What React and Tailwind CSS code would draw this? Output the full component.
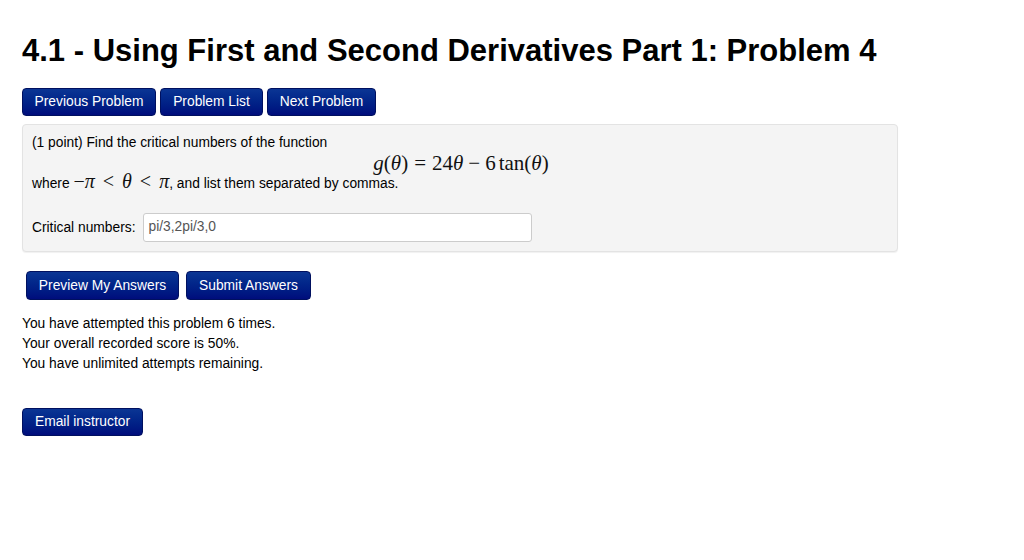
export default function App() {
  const btn =
    "h-[28px] px-[8px] rounded-[4px] text-white text-[13.8px] bg-gradient-to-b from-[#0b3594] to-[#000c7c] border border-[#00105f] leading-none flex items-center justify-center";
  const serif = { fontFamily: '"Liberation Serif", "Times New Roman", serif' };
  return (
    <div className="w-[1024px] h-[560px] bg-white text-black px-[22px] pt-[31px]" style={{ fontFamily: '"Liberation Sans", Arial, sans-serif' }}>
      <h1 className="text-[31px] font-bold leading-[40px]">
        4.1 - Using First and Second Derivatives Part 1: Problem 4
      </h1>
      <div className="flex gap-[4px] mt-[17px]">
        <button className={btn + " w-[134px]"}>Previous Problem</button>
        <button className={btn + " w-[103px]"}>Problem List</button>
        <button className={btn + " w-[109px]"}>Next Problem</button>
      </div>
      <div className="mt-[8px] w-[876px] h-[128px] bg-[#f4f4f4] border border-[#e3e3e3] rounded-[4px] shadow-[0_1px_1px_rgba(0,0,0,0.06)] px-[9px] pt-[9px] text-[13.8px]">
        <div className="leading-[18px]">(1 point) Find the critical numbers of the function</div>
        <div className="flex justify-center leading-[22px] h-[21px]">
          <span className="text-[21px] text-[#111] pl-[2px]" style={serif}>
            <i>g</i>(<i>θ</i>)<span className="mx-[6px]">=</span>24<i>θ</i><span className="mx-[5px]">−</span>6<span className="ml-[3px]">tan</span>(<i>θ</i>)
          </span>
        </div>
        <div className="leading-[20px] h-[21px] pt-[1px]">
          <span>where&nbsp;</span>
          <span className="text-[20px] text-[#111] leading-[10px]" style={serif}>
            −<i>π</i><span className="mx-[8px]">&lt;</span><i>θ</i><span className="mx-[8px]">&lt;</span><i>π</i>
          </span>
          <span>, and list them separated by commas.</span>
        </div>
        <div className="flex items-center mt-[19px]">
          <span className="leading-[18px]">Critical numbers:</span>
          <div className="ml-[7px] w-[389px] h-[29px] bg-white border border-[#cccccc] rounded-[3px] flex items-center px-[5px] text-[#555] text-[13.8px]">
            pi/3,2pi/3,0
          </div>
        </div>
      </div>
      <div className="flex gap-[7px] mt-[19px] ml-[4px]">
        <button className={btn + " w-[153px] h-[29px]"}>Preview My Answers</button>
        <button className={btn + " w-[125px] h-[29px]"}>Submit Answers</button>
      </div>
      <div className="mt-[14px] text-[13.8px] leading-[20px]">
        <div>You have attempted this problem 6 times.</div>
        <div>Your overall recorded score is 50%.</div>
        <div>You have unlimited attempts remaining.</div>
      </div>
      <div className="mt-[34px]">
        <button className={btn + " w-[121px]"}>Email instructor</button>
      </div>
    </div>
  );
}
